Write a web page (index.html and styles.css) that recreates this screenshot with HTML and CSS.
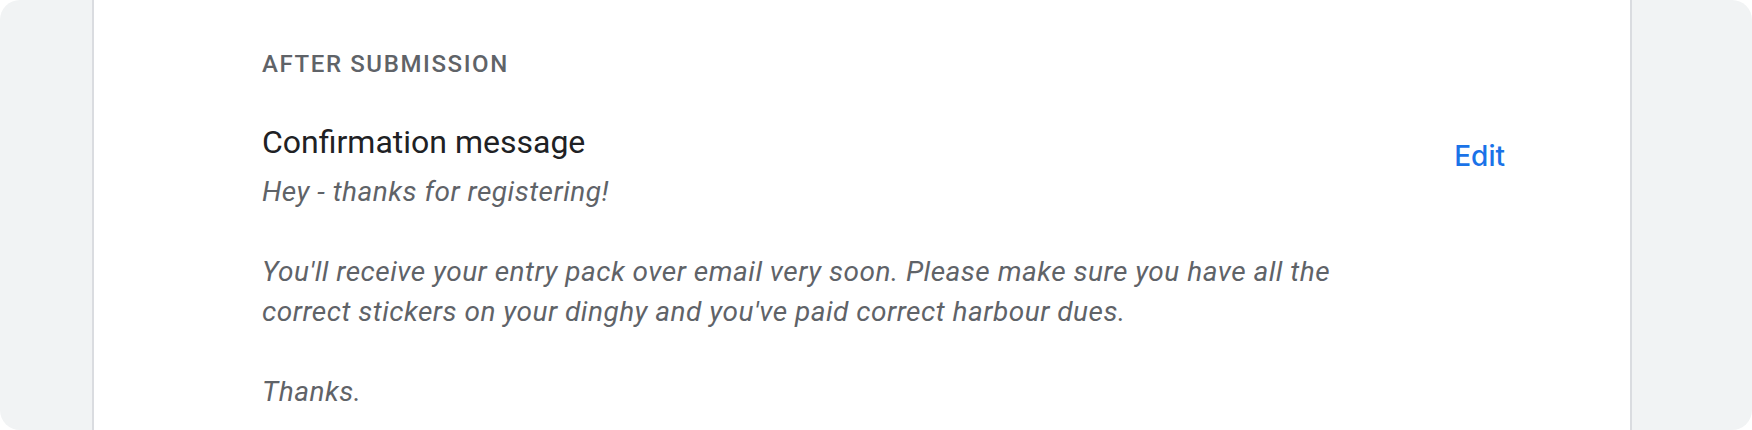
FILE: index.html
```html
<!DOCTYPE html>
<html lang="en">
<head>
<meta charset="utf-8">
<title>After submission</title>
<link rel="stylesheet" href="styles.css">
</head>
<body>
<div class="frame">
  <main class="card">
    <section class="section">
      <h2 class="section-label">After submission</h2>
      <div class="setting-row">
        <div class="setting-body">
          <h3 class="setting-title">Confirmation message</h3>
          <p class="setting-value">Hey - thanks for registering!

You'll receive your entry pack over email very soon. Please make sure you have all the correct stickers on your dinghy and you've paid correct harbour dues.

Thanks.</p>
        </div>
        <a class="edit-link" href="#">Edit</a>
      </div>
    </section>
  </main>
</div>
</body>
</html>
```
FILE: styles.css
```css
html, body {
  margin: 0;
  padding: 0;
  background: #ffffff;
  height: 430px;
  overflow: hidden;
}

.frame {
  height: 430px;
  box-sizing: border-box;
  background: #f1f3f4;
  border-radius: 20px;
  padding-left: 92px;
  display: flex;
}

.card {
  width: 1540px;
  box-sizing: border-box;
  background: #ffffff;
  border-left: 2px solid #dadce0;
  border-right: 2px solid #dadce0;
  padding: 0 125px 0 168px;
}

.section {
  padding-top: 48px;
}

.section-label {
  margin: 0;
  font-family: Roboto, "Liberation Sans", sans-serif;
  font-weight: 500;
  font-size: 24px;
  line-height: 32px;
  letter-spacing: 1.6px;
  text-transform: uppercase;
  color: #5f6368;
}

.setting-row {
  display: flex;
  justify-content: space-between;
  align-items: flex-start;
  margin-top: 42px;
}

.setting-body {
  max-width: 1100px;
}

.setting-title {
  margin: 0;
  font-family: Roboto, "Liberation Sans", sans-serif;
  font-weight: 400;
  font-size: 32px;
  line-height: 40px;
  color: #202124;
}

.setting-value {
  margin: 10px 0 0;
  font-family: Roboto, "Liberation Sans", sans-serif;
  font-style: italic;
  font-size: 28px;
  line-height: 40px;
  letter-spacing: 0.5px;
  color: #5f6368;
  white-space: pre-line;
}

.edit-link {
  margin-top: 14px;
  font-family: Inter, Roboto, "Liberation Sans", sans-serif;
  font-weight: 500;
  font-size: 28px;
  line-height: 40px;
  color: #1a73e8;
  text-decoration: none;
}
```
